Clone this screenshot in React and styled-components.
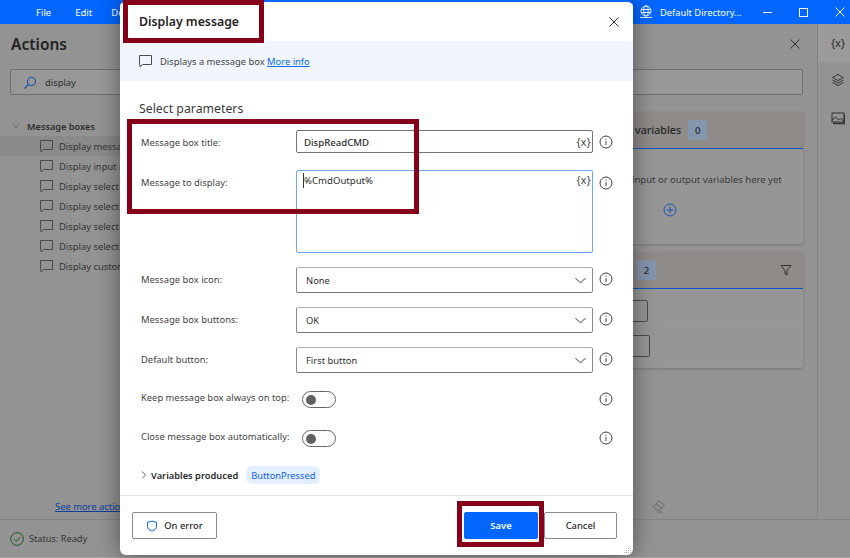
import React from "react";
import styled, { createGlobalStyle } from "styled-components";

const GlobalStyle = createGlobalStyle`
  html, body {
    margin: 0;
    padding: 0;
    width: 850px;
    height: 558px;
    overflow: hidden;
    font-family: "Noto Sans", "Open Sans", sans-serif;
  }
  * { box-sizing: border-box; }
`;

const Page = styled.div`
  position: relative;
  width: 850px;
  height: 558px;
  display: flex;
  flex-direction: column;
  background: #939393;
  color: #2a2a2a;
  overflow: hidden;
`;

/* ---- window behind the dialog ---- */

const TitleBar = styled.header`
  height: 24px;
  flex: none;
  display: flex;
  align-items: center;
  background: #0066ff;
  color: #fff;
  font-size: 9.5px;
  padding-left: 36px;
`;

const MenuItem = styled.span`
  margin-right: ${(p) => p.$gap}px;
`;

const TitleRight = styled.div`
  margin-left: auto;
  display: flex;
  align-items: center;
  color: #fff;
`;

const Tenant = styled.span`
  font-size: 9.3px;
  margin: 0 16px 0 7px;
  width: 81px;
  white-space: nowrap;
`;

const WinControls = styled.div`
  display: flex;
  gap: 16.5px;
`;

const WinButton = styled.span`
  width: 20px;
  height: 24px;
  display: flex;
  align-items: center;
  justify-content: center;
`;

const Workspace = styled.div`
  flex: 1;
  display: flex;
  min-height: 0;
`;

const ActionsPane = styled.section`
  flex: 1;
  display: flex;
  flex-direction: column;
  padding: 0 14px 0 10px;
  border-right: 1px solid #838383;
`;

const PaneHead = styled.div`
  display: flex;
  justify-content: space-between;
  align-items: center;
  height: 45px;
  padding: 0 3px 5px 1px;
`;

const PaneTitle = styled.h1`
  margin: 0;
  font-size: 15.5px;
  font-weight: 600;
  color: #232323;
`;

const SearchBox = styled.div`
  height: 26px;
  flex: none;
  display: flex;
  align-items: center;
  gap: 8px;
  padding: 1px 0 0 12px;
  border: 1px solid #6f6f6f;
  border-radius: 2px;
  background: #989898;
  font-size: 9.4px;
  color: #2e2e2e;
`;

const PaneColumns = styled.div`
  flex: 1;
  display: flex;
  min-height: 0;
`;

const Tree = styled.div`
  width: 537px;
  flex: none;
  display: flex;
  flex-direction: column;
  padding-top: 21px;
  margin-left: -10px;
`;

const TreeGroup = styled.div`
  height: 20px;
  display: flex;
  align-items: center;
  gap: 7px;
  padding-left: 12px;
  font-size: 9.2px;
  font-weight: 600;
  color: #2e2e2e;
`;

const TreeItem = styled.div`
  height: 20px;
  display: flex;
  align-items: center;
  gap: 5px;
  padding-left: 39px;
  font-size: 9.4px;
  color: #333;
  background: ${(p) => (p.$active ? "#8a8a8a" : "transparent")};
`;

const Cards = styled.div`
  width: 266px;
  flex: none;
  padding-top: 17px;
  display: flex;
  flex-direction: column;
  gap: 8px;
`;

const Card = styled.div`
  background: #969696;
  border-radius: 3px;
  box-shadow: 0 1px 3px rgba(0, 0, 0, 0.18);
  height: ${(p) => p.$height}px;
`;

const CardHead = styled.div`
  height: 37px;
  display: flex;
  align-items: center;
  gap: 7px;
  padding: 0 11px 0 ${(p) => p.$left}px;
  background: #8e8b88;
  border-bottom: 1px solid #0b56c4;
  border-radius: 3px 3px 0 0;
  font-size: 10.7px;
  font-weight: 500;
  color: #262626;
  white-space: nowrap;
`;

const CountBadge = styled.span`
  width: 19px;
  height: 20px;
  display: flex;
  align-items: center;
  justify-content: center;
  background: #8496ad;
  font-size: 9.5px;
`;

const EmptyText = styled.p`
  margin: 0;
  padding: 24px 0 0 95px;
  font-size: 9.5px;
  color: #3a3a3a;
`;

const AddRow = styled.div`
  display: flex;
  justify-content: center;
  padding-top: 17px;
`;

const VarRow = styled.div`
  height: ${(p) => p.$height}px;
  padding: ${(p) => p.$top}px 0 0 13px;
  border-bottom: 1px solid #999;
`;

const VarChip = styled.div`
  width: ${(p) => p.$width}px;
  height: 22px;
  border: 1px solid #4a4a4a;
  border-radius: 2px;
`;

const PaneFoot = styled.div`
  margin-top: auto;
  height: 28px;
  display: flex;
  align-items: center;
  justify-content: space-between;
  padding: 2px 137px 0 45px;
  font-size: 9.4px;
`;

const SeeMore = styled.a`
  color: #0b3f9c;
  text-decoration: underline;
`;

const SideRail = styled.aside`
  width: 32px;
  flex: none;
  display: flex;
  flex-direction: column;
`;

const RailTab = styled.div`
  width: 100%;
  height: 37.5px;
  display: flex;
  align-items: center;
  justify-content: center;
  padding-left: 8px;
  font-size: 11px;
  color: #2a2a2a;
  background: ${(p) => (p.$active ? "#9b9b9b" : "transparent")};
`;

const StatusBar = styled.footer`
  height: 39px;
  flex: none;
  display: flex;
  align-items: center;
  gap: 5px;
  padding: 0 0 0 10px;
  border-top: 1px solid #838383;
  border-bottom: 1px solid #a5a5a5;
  font-size: 9.2px;
  color: #333;
`;

/* ---- dialog ---- */

const Dialog = styled.div`
  position: absolute;
  left: 120px;
  top: 0;
  width: 513px;
  height: 555px;
  display: flex;
  flex-direction: column;
  background: #fff;
  border-top: 2px solid #0a66f5;
  border-radius: 6px;
  box-shadow: 0 0 22px rgba(0, 0, 0, 0.45);
`;

const DialogHead = styled.div`
  height: 39px;
  flex: none;
  display: flex;
  align-items: center;
  justify-content: space-between;
  padding: 0 14px 0 19px;
`;

const DialogTitle = styled.h2`
  margin: 0;
  font-size: 12.3px;
  font-weight: 600;
  color: #242424;
`;

const InfoBand = styled.div`
  height: 40px;
  flex: none;
  display: flex;
  align-items: center;
  gap: 7px;
  padding-left: 18px;
  background: #f0f5fe;
  font-size: 9.4px;
  color: #444;
`;

const MoreInfo = styled.a`
  color: #0f6cf0;
  text-decoration: underline;
`;

const Params = styled.div`
  flex: 1;
  display: flex;
  flex-direction: column;
  padding: 19px 0 0 21px;
`;

const ParamsTitle = styled.h3`
  margin: 0 0 12px -2px;
  font-size: 12.3px;
  font-weight: 400;
  line-height: 18px;
  color: #3a3a3a;
`;

const FieldList = styled.div`
  display: flex;
  flex-direction: column;
  gap: 14px;
`;

const FieldRow = styled.div`
  display: flex;
  align-items: flex-start;
  margin-bottom: ${(p) => p.$after || 0}px;
`;

const FieldLabel = styled.label`
  width: 155px;
  flex: none;
  font-size: 9.4px;
  line-height: 14px;
  padding-top: ${(p) => p.$top || 6}px;
  color: #444;
  white-space: nowrap;
`;

const InputBox = styled.div`
  width: 297px;
  height: ${(p) => p.$height}px;
  display: flex;
  justify-content: space-between;
  align-items: flex-start;
  border: 1px solid ${(p) => (p.$focus ? "#6aa5ff" : "#757575")};
  border-radius: 2px;
  font-size: 9.6px;
  font-weight: ${(p) => (p.$bold ? 500 : 400)};
  color: #2c2c2c;
  padding: ${(p) => p.$top}px 0 0 7px;
  line-height: 15px;
`;

const CaretText = styled.span`
  border-left: 1px solid #333;
  margin-left: -1px;
`;

const VarToken = styled.span`
  font-size: 10.5px;
  font-weight: 400;
  color: #444;
  margin-right: 1px;
  letter-spacing: 0.3px;
`;

const SelectBox = styled.div`
  width: 297px;
  height: 26px;
  display: flex;
  align-items: center;
  justify-content: space-between;
  padding: 1px 5px 0 9px;
  border: 1px solid #8a8a8a;
  border-top-color: #b0b0b0;
  border-bottom-color: #757575;
  border-radius: 2px;
  font-size: 9.4px;
  color: #333;
`;

const InfoSlot = styled.span`
  width: 26px;
  flex: none;
  display: flex;
  justify-content: center;
  padding-top: ${(p) => p.$top || 5}px;
`;

const ToggleSlot = styled.div`
  width: 297px;
  height: 25px;
  display: flex;
  align-items: center;
  padding-left: 6px;
`;

const Toggle = styled.span`
  width: 34px;
  height: 17px;
  display: flex;
  align-items: center;
  padding-left: 3px;
  border: 1px solid #666;
  border-radius: 9px;
  &::before {
    content: "";
    width: 10px;
    height: 10px;
    border-radius: 50%;
    background: #616161;
  }
`;

const Produced = styled.div`
  margin-top: 14px;
  display: flex;
  align-items: center;
  height: 20px;
  font-size: 9.3px;
  font-weight: 600;
  color: #2a2a2a;
`;

const ProducedLabel = styled.span`
  margin: 0 8px 0 4px;
`;

const VarPill = styled.span`
  height: 18px;
  display: flex;
  align-items: center;
  padding: 0 5px;
  border-radius: 6px;
  background: #e4effe;
  color: #0f62e6;
  font-weight: 400;
`;

const DialogFoot = styled.div`
  position: relative;
  height: 60px;
  flex: none;
  display: flex;
  align-items: center;
  padding: 0 16px 0 12px;
  border-top: 1px solid #e6e6e6;
`;

const FootButton = styled.button`
  height: 27px;
  display: flex;
  align-items: center;
  justify-content: center;
  gap: 6px;
  width: ${(p) => p.$width}px;
  margin-left: ${(p) => p.$left || 0}px;
  border: 1px solid ${(p) => (p.$primary ? "#0066ff" : "#8a8a8a")};
  border-radius: 2px;
  background: ${(p) => (p.$primary ? "#0066ff" : "#fff")};
  color: ${(p) => (p.$primary ? "#fff" : "#2a2a2a")};
  font-family: inherit;
  font-size: 9.4px;
  font-weight: ${(p) => (p.$primary ? 600 : 500)};
  padding: 0;
`;

const Grip = styled.svg`
  position: absolute;
  right: 1px;
  bottom: 1px;
`;

/* red call-outs drawn over the screenshot */
const Callout = styled.div`
  position: absolute;
  left: ${(p) => p.$x}px;
  top: ${(p) => p.$y}px;
  width: ${(p) => p.$w}px;
  height: ${(p) => p.$h}px;
  border: 5px solid #850018;
  pointer-events: none;
`;

/* ---- icons ---- */

const Bubble = () => (
  <svg width="15" height="14" viewBox="0 0 15 14" fill="none" stroke="#4a4a4a" strokeWidth="1">
    <path d="M1.500 1.500h12v9H4.500L2 13v-2.500h-.5z" />
  </svg>
);

const Info = () => (
  <svg width="14" height="14" viewBox="0 0 14 14" fill="none" stroke="#3c3c3c" strokeWidth="1">
    <circle cx="7" cy="7" r="6" />
    <path d="M7 6.200v4M7 3.800v1" />
  </svg>
);

const Chevron = ({ size = 13, color = "#444" }) => (
  <svg width={size} height={size} viewBox="0 0 13 13" fill="none" stroke={color} strokeWidth="1">
    <path d="M1.500 4l5 5 5-5" />
  </svg>
);

const Cross = ({ size = 10, color = "#333" }) => (
  <svg width={size} height={size} viewBox="0 0 10 10" fill="none" stroke={color} strokeWidth="1">
    <path d="M.5.5l9 9M9.500.5l-9 9" />
  </svg>
);

const fields = [
  { label: "Message box icon:", value: "None" },
  { label: "Message box buttons:", value: "OK" },
  { label: "Default button:", value: "First button" },
];

const treeItems = [
  "Display message",
  "Display input dialog",
  "Display select file",
  "Display select folder dialog",
  "Display select date dialog",
  "Display select list dialog",
  "Display custom form",
];

export default function App() {
  return (
    <>
      <GlobalStyle />
      <Page>
        <TitleBar>
          <MenuItem $gap={24}>File</MenuItem>
          <MenuItem $gap={19}>Edit</MenuItem>
          <MenuItem $gap={0}>Debug</MenuItem>
          <TitleRight>
            <svg width="14" height="14" viewBox="0 0 14 14" fill="none" stroke="#fff" strokeWidth="0.9">
              <circle cx="7" cy="6" r="5" />
              <ellipse cx="7" cy="6" rx="2.200" ry="5" />
              <path d="M2 4.500h10M2 7.500h10M1 12.500h12" />
            </svg>
            <Tenant>Default Directory...</Tenant>
            <WinControls>
              <WinButton>
                <svg width="9" height="9" viewBox="0 0 9 9" stroke="#fff"><path d="M0 4.500h9" /></svg>
              </WinButton>
              <WinButton>
                <svg width="9" height="9" viewBox="0 0 9 9" fill="none" stroke="#fff"><rect x=".5" y=".5" width="8" height="8" /></svg>
              </WinButton>
              <WinButton>
                <Cross color="#fff" />
              </WinButton>
            </WinControls>
          </TitleRight>
        </TitleBar>
        <Workspace>
          <ActionsPane>
            <PaneHead>
              <PaneTitle>Actions</PaneTitle>
              <Cross />
            </PaneHead>
            <SearchBox>
              <svg width="14" height="14" viewBox="0 0 14 14" fill="none" stroke="#1c4fa8" strokeWidth="1.100">
                <circle cx="8.500" cy="5.500" r="4" />
                <path d="M5.500 8.500L1.500 12.500" />
              </svg>
              display
            </SearchBox>
            <PaneColumns>
              <Tree>
                <TreeGroup>
                  <Chevron size={8} />
                  Message boxes
                </TreeGroup>
                {treeItems.map((item, i) => (
                  <TreeItem key={item} $active={i === 0}>
                    <Bubble />
                    {item}
                  </TreeItem>
                ))}
              </Tree>
              <Cards>
                <Card $height={132}>
                  <CardHead $left={98}>
                    variables
                    <CountBadge>0</CountBadge>
                  </CardHead>
                  <EmptyText>input or output variables here yet</EmptyText>
                  <AddRow>
                    <svg width="14" height="14" viewBox="0 0 14 14" fill="none" stroke="#1c56b8">
                      <circle cx="7" cy="7" r="6" />
                      <path d="M7 3.500v7M3.500 7h7" />
                    </svg>
                  </AddRow>
                </Card>
                <Card $height={116}>
                  <CardHead $left={100}>
                    <CountBadge>2</CountBadge>
                    <svg style={{ marginLeft: "auto" }} width="12" height="12" viewBox="0 0 12 12" fill="none" stroke="#333">
                      <path d="M1 1.500h10L7 6.500V11L5 10V6.500z" />
                    </svg>
                  </CardHead>
                  <VarRow $height={39} $top={11}><VarChip $width={98} /></VarRow>
                  <VarRow $height={35} $top={7}><VarChip $width={100} /></VarRow>
                </Card>
              </Cards>
            </PaneColumns>
            <PaneFoot>
              <SeeMore>See more actions</SeeMore>
              <svg width="14" height="14" viewBox="0 0 14 14" fill="none" stroke="#6a6a6a">
                <path d="M1.500 7.500l5.500-5.500 5.500 4-5 5H4.500zM4 5l5.500 4M5 13h5" />
              </svg>
            </PaneFoot>
          </ActionsPane>
          <SideRail>
            <RailTab $active>{"{x}"}</RailTab>
            <RailTab>
              <svg width="14" height="14" viewBox="0 0 14 14" fill="none" stroke="#333">
                <path d="M7 1.500l5.500 3-5.500 3-5.500-3zM1.500 7L7 10l5.500-3M1.500 9.500l5.500 3 5.500-3" />
              </svg>
            </RailTab>
            <RailTab>
              <svg width="14" height="14" viewBox="0 0 14 14" fill="none" stroke="#333">
                <rect x="1" y="2" width="12" height="9" />
                <path d="M1 9l3.500-3 3 3 2-1.500L13 10" />
                <path d="M2 12.500h11.500V4" strokeWidth="1.500" />
              </svg>
            </RailTab>
          </SideRail>
        </Workspace>
        <StatusBar>
          <svg width="14" height="14" viewBox="0 0 14 14" fill="none" stroke="#1f5a25">
            <circle cx="7" cy="7" r="6.300" />
            <path d="M4 7.200l2.200 2.200L10 5" />
          </svg>
          Status: Ready
        </StatusBar>

        <Dialog>
          <DialogHead>
            <DialogTitle>Display message</DialogTitle>
            <Cross />
          </DialogHead>
          <InfoBand>
            <Bubble />
            <span>
              Displays a message box <MoreInfo>More info</MoreInfo>
            </span>
          </InfoBand>
          <Params>
            <ParamsTitle>Select parameters</ParamsTitle>
            <FieldList>
              <FieldRow $after={3}>
                <FieldLabel>Message box title:</FieldLabel>
                <InputBox $height={23} $top={4} $bold>
                  <span>DispReadCMD</span>
                  <VarToken>{"{x}"}</VarToken>
                </InputBox>
                <InfoSlot><Info /></InfoSlot>
              </FieldRow>
              <FieldRow>
                <FieldLabel>Message to display:</FieldLabel>
                <InputBox $height={83} $top={2} $focus>
                  <CaretText>%CmdOutput%</CaretText>
                  <VarToken>{"{x}"}</VarToken>
                </InputBox>
                <InfoSlot $top={6}><Info /></InfoSlot>
              </FieldRow>
              {fields.map((f) => (
                <FieldRow key={f.label}>
                  <FieldLabel>{f.label}</FieldLabel>
                  <SelectBox>
                    {f.value}
                    <Chevron />
                  </SelectBox>
                  <InfoSlot><Info /></InfoSlot>
                </FieldRow>
              ))}
              <FieldRow>
                <FieldLabel $top={4}>Keep message box always on top:</FieldLabel>
                <ToggleSlot><Toggle /></ToggleSlot>
                <InfoSlot><Info /></InfoSlot>
              </FieldRow>
              <FieldRow>
                <FieldLabel $top={4}>Close message box automatically:</FieldLabel>
                <ToggleSlot><Toggle /></ToggleSlot>
                <InfoSlot><Info /></InfoSlot>
              </FieldRow>
            </FieldList>
            <Produced>
              <svg width="6" height="8" viewBox="0 0 6 8" fill="none" stroke="#666"><path d="M1 .5L4.500 4 1 7.500" /></svg>
              <ProducedLabel>Variables produced</ProducedLabel>
              <VarPill>ButtonPressed</VarPill>
            </Produced>
          </Params>
          <DialogFoot>
            <FootButton $width={85}>
              <svg width="12" height="12" viewBox="0 0 12 12" fill="none" stroke="#2b78e8" strokeWidth="1.100">
                <path d="M6 1l4.500 1.500V6c0 2.500-2 4.200-4.500 5C3.500 10.200 1.500 8.500 1.500 6V2.500z" />
              </svg>
              On error
            </FootButton>
            <FootButton $primary $width={74} $left={247}>Save</FootButton>
            <FootButton $width={73} $left={6}>Cancel</FootButton>
            <Grip width="8" height="8" viewBox="0 0 8 8" fill="#b8b8b8">
              <rect x="6" y="0" width="1" height="1" />
              <rect x="4" y="2" width="1" height="1" />
              <rect x="6" y="2" width="1" height="1" />
              <rect x="2" y="4" width="1" height="1" />
              <rect x="4" y="4" width="1" height="1" />
              <rect x="6" y="4" width="1" height="1" />
              <rect x="0" y="6" width="1" height="1" />
              <rect x="2" y="6" width="1" height="1" />
              <rect x="4" y="6" width="1" height="1" />
              <rect x="6" y="6" width="1" height="1" />
            </Grip>
          </DialogFoot>
        </Dialog>

        <Callout $x={123} $y={0} $w={141} $h={43} />
        <Callout $x={127} $y={119} $w={292} $h={95} />
        <Callout $x={457} $y={501} $w={87} $h={46} />
      </Page>
    </>
  );
}
